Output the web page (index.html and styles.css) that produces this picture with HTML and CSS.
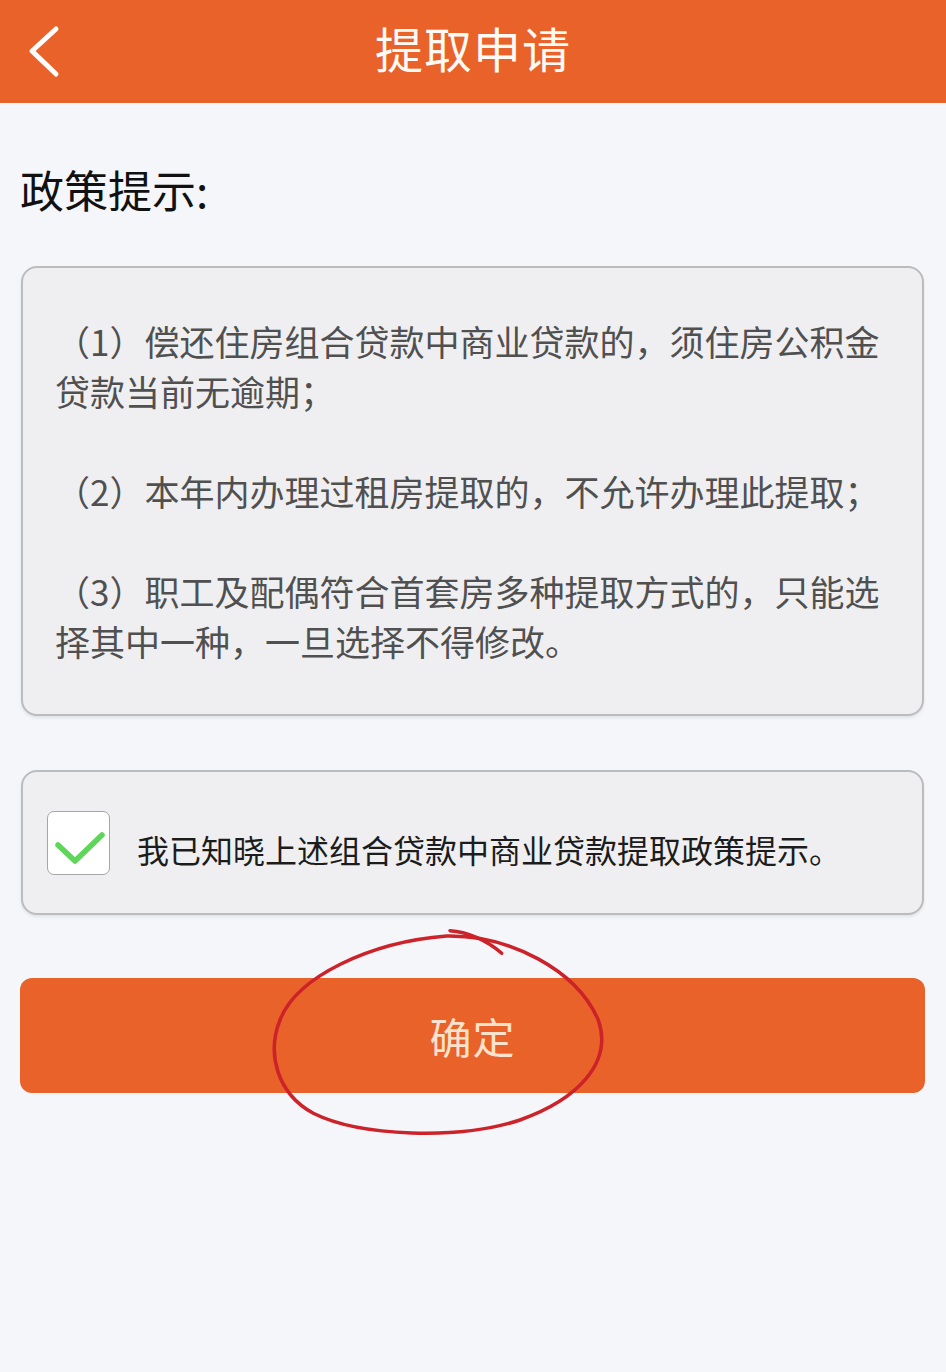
FILE: index.html
```html
<!DOCTYPE html>
<html lang="zh-CN">
<head>
<meta charset="utf-8">
<title>提取申请</title>
<link rel="stylesheet" href="styles.css">
</head>
<body>
<header class="topbar">
  <div class="back">
    <svg class="back-icon" width="40" height="56" viewBox="0 0 40 56">
      <polyline points="30,5 6,27 30,50" fill="none" stroke="#ffffff" stroke-width="5" stroke-linecap="round" stroke-linejoin="round"/>
    </svg>
  </div>
  <h1 class="title">提取申请</h1>
  <div></div>
</header>

<main class="content">
  <h2 class="heading">政策提示:</h2>

  <section class="policy">
    <p>（1）偿还住房组合贷款中商业贷款的，须住房公积金贷款当前无逾期；</p>
    <p>（2）本年内办理过租房提取的，不允许办理此提取；</p>
    <p>（3）职工及配偶符合首套房多种提取方式的，只能选择其中一种，一旦选择不得修改。</p>
  </section>

  <section class="agree">
    <span class="checkbox">
      <svg width="60" height="60" viewBox="0 0 60 60">
        <polyline points="9,32 26,48 53,22" fill="none" stroke="#5dd65a" stroke-width="5.5" stroke-linecap="round" stroke-linejoin="round"/>
      </svg>
    </span>
    <span class="agree-text">我已知晓上述组合贷款中商业贷款提取政策提示。</span>
  </section>

  <button class="confirm">确定</button>
</main>

<svg class="mark" width="946" height="1372" viewBox="0 0 946 1372">
  <path d="M501.7 953.3 C486.7 940 466.7 931.7 450 930.7" fill="none" stroke="#cc2229" stroke-width="3.5" stroke-linecap="round"/>
  <path d="M446.7 936 C510 935 576.7 970 598.3 1020 C613.3 1063.3 576.7 1100 520 1120 C460 1140 360 1136.7 313.3 1113.3 C276.7 1093.3 266.7 1053.3 280 1020 C296.7 976.7 370 942 446.7 936" fill="none" stroke="#cc2229" stroke-width="3.5" stroke-linecap="round"/>
</svg>
</body>
</html>
```

FILE: styles.css
```css
* {
  box-sizing: border-box;
}

html, body {
  margin: 0;
  padding: 0;
}

body {
  position: relative;
  width: 946px;
  min-height: 1372px;
  background: #f5f6fa;
  font-family: "Noto Sans CJK SC", "Noto Sans", sans-serif;
  color: #1a1a1a;
}

.topbar {
  height: 103px;
  background: #e8622a;
  display: grid;
  grid-template-columns: 1fr auto 1fr;
  align-items: center;
}

.back {
  padding-left: 26px;
  display: flex;
  align-items: center;
}

.back-icon {
  display: block;
}

.title {
  margin: 0 0 10px;
  font-size: 48px;
  font-weight: 400;
  color: #fffaf4;
  line-height: 1;
  letter-spacing: 1px;
}

.content {
  padding: 0 22px 0 21px;
  display: flex;
  flex-direction: column;
}

.heading {
  margin: 60px 0 0 -1px;
  font-size: 44px;
  font-weight: 400;
  line-height: 52px;
  color: #111111;
}

.policy {
  margin-top: 51px;
  background: #efeff1;
  border: 2px solid #bcbcbe;
  border-radius: 16px;
  padding: 48px 32px;
  box-shadow: 0 2px 3px rgba(0, 0, 0, 0.08);
}

.policy p {
  margin: 0;
  font-size: 35px;
  line-height: 50px;
  color: #505050;
}

.policy p + p {
  margin-top: 50px;
}

.agree {
  margin-top: 54px;
  height: 145px;
  background: #efeff1;
  border: 2px solid #bcbcbe;
  border-radius: 16px;
  padding: 0 24px;
  display: flex;
  align-items: center;
  gap: 27px;
  box-shadow: 0 2px 3px rgba(0, 0, 0, 0.08);
}

.checkbox {
  width: 63px;
  height: 64px;
  flex: none;
  background: #ffffff;
  border: 1.5px solid #a6a6a6;
  border-radius: 7px;
  display: flex;
  align-items: center;
  justify-content: center;
}

.agree-text {
  font-size: 32px;
  line-height: 40px;
  color: #1c1c1c;
  margin-top: 12px;
}

.confirm {
  margin: 63px 0 0 -1px;
  height: 115px;
  width: 905px;
  border: none;
  border-radius: 12px;
  background: #e8622a;
  color: #fbe2cd;
  font-family: "Noto Sans CJK SC", "Noto Sans", sans-serif;
  font-size: 42px;
  font-weight: 400;
  letter-spacing: 1px;
}

.mark {
  position: absolute;
  left: 0;
  top: 0;
  pointer-events: none;
}
```
